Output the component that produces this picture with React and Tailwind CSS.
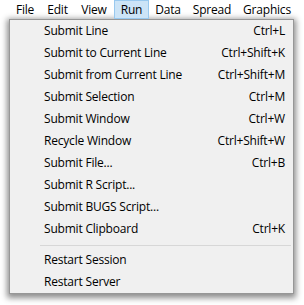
import React from "react";

const bar = [
  ["File", "w-[32px]"],
  ["Edit", "w-[33px]"],
  ["View", "w-[40px]"],
  ["Run", "w-[35px]"],
  ["Data", "w-[38px]"],
  ["Spread", "w-[50px]"],
  ["Graphics", "w-[60px]"],
];

const items = [
  ["Submit Line", "Ctrl+L"],
  ["Submit to Current Line", "Ctrl+Shift+K"],
  ["Submit from Current Line", "Ctrl+Shift+M"],
  ["Submit Selection", "Ctrl+M"],
  ["Submit Window", "Ctrl+W"],
  ["Recycle Window", "Ctrl+Shift+W"],
  ["Submit File...", "Ctrl+B"],
  ["Submit R Script...", ""],
  ["Submit BUGS Script...", ""],
  ["Submit Clipboard", "Ctrl+K"],
];

const items2 = [
  ["Restart Session", ""],
  ["Restart Server", ""],
];

function Row({ label, sc }) {
  return (
    <div className="flex h-[22px] items-center justify-between pl-[34px] pr-[8px]">
      <span>{label}</span>
      <span>{sc}</span>
    </div>
  );
}

export default function App() {
  return (
    <div
      className="w-[304px] h-[305px] bg-white text-[12px] tracking-[-0.2px] text-black overflow-hidden"
      style={{ fontFamily: '"Open Sans", "Noto Sans", sans-serif' }}
    >
      <div className="flex h-[19px] pl-[9px] bg-white">
        {bar.map(([t, w]) => (
          <div
            key={t}
            className={
              w +
              " flex items-center justify-center h-[19px] " +
              (t === "Run"
                ? "bg-[#cce4f7] border border-[#99c9ef]"
                : "")
            }
          >
            {t}
          </div>
        ))}
      </div>
      <div className="ml-[9px] w-[285px] bg-[#f0f0f0] border border-[#979797] shadow-[0_2px_6px_2px_rgba(0,0,0,0.45)]">
        {items.map(([l, s]) => (
          <Row key={l} label={l} sc={s} />
        ))}
        <div className="h-[9px] flex items-center pl-[30px] pr-[2px] pt-[2px]">
          <div className="h-px w-full bg-[#d7d7d7]" />
        </div>
        {items2.map(([l, s]) => (
          <Row key={l} label={l} sc={s} />
        ))}
      </div>
    </div>
  );
}
